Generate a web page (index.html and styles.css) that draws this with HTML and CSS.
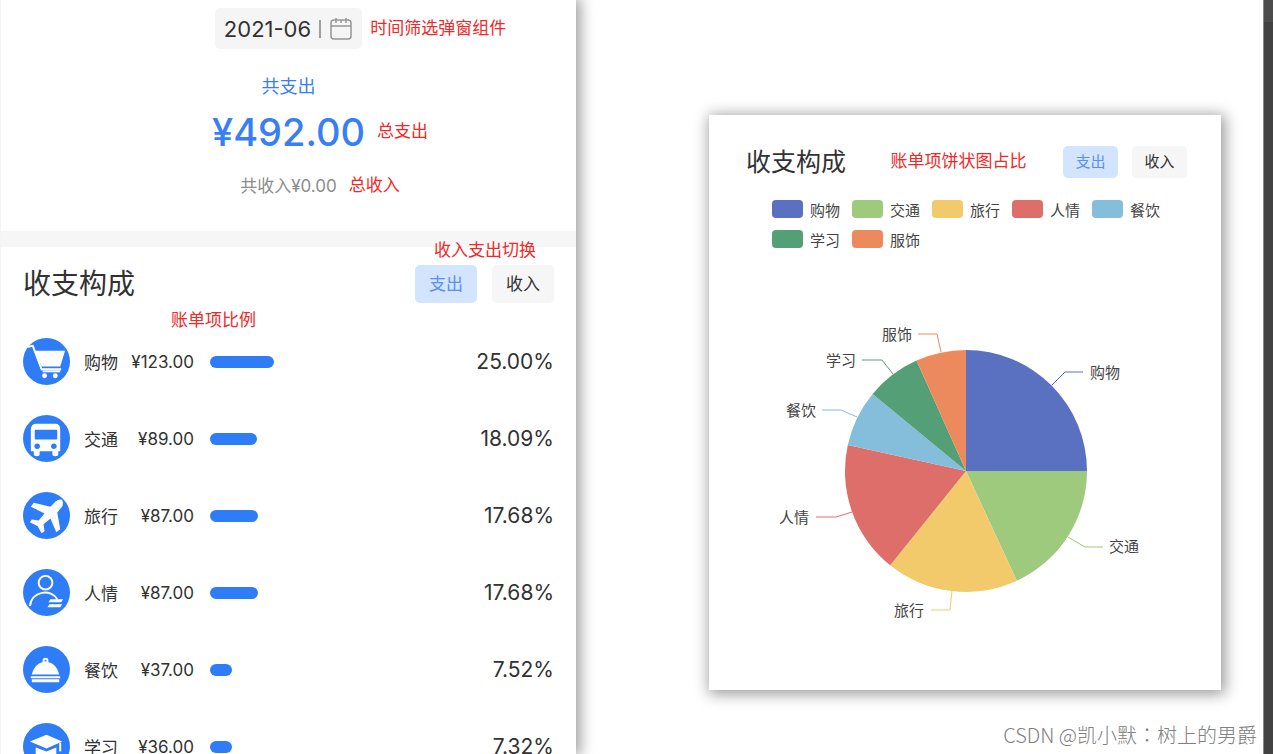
FILE: index.html
```html
<!DOCTYPE html>
<html lang="zh-CN">
<head>
  <meta charset="UTF-8" />
  <meta name="viewport" content="width=device-width, initial-scale=1.0" />
  <title>账单统计</title>
  <link rel="stylesheet" href="styles.css">
</head>
<body>
  <div class="page">
    <section class="phone">
      <div class="summary">
        <div class="line">
          <button class="month" type="button">
            <span>2021-06</span>
            <span class="sep"></span>
            <svg class="calendar" viewBox="0 0 24 24" aria-hidden="true">
              <rect x="2" y="3" width="20" height="19" rx="3" />
              <path d="M2 9h20M7 1v5M12 3v3M17 1v5" />
            </svg>
          </button>
          <span class="note">时间筛选弹窗组件</span>
        </div>
        <div class="expense-label">共支出</div>
        <div class="line expense">
          <span>¥492.00</span>
          <span class="note">总支出</span>
        </div>
        <div class="line income">
          <span>共收入¥0.00</span>
          <span class="note">总收入</span>
        </div>
      </div>

      <div class="structure">
        <div class="head">
          <h2>收支构成</h2>
          <span class="note note-ratio">账单项比例</span>
          <div class="tabs">
            <span class="note note-switch">收入支出切换</span>
            <button class="tab active" type="button">支出</button>
            <button class="tab" type="button">收入</button>
          </div>
        </div>

        <ul class="list">
          <li class="item">
            <svg class="icon" viewBox="0 0 48 48" aria-hidden="true">
              <circle class="disc" cx="24" cy="24" r="24" />
              <path class="fill" d="M12 13h31l-5 16H19z" />
              <path class="stroke" d="M5 9l5-1 9 24h20" />
              <path class="stroke" d="M20 34h18" />
              <circle class="fill" cx="22" cy="38.500" r="2.500" />
              <circle class="fill" cx="33" cy="38.500" r="2.500" />
            </svg>
            <span class="name">购物</span>
            <span class="amount">¥123.00</span>
            <span class="track"><i class="bar" style="width: 25%"></i></span>
            <span class="percent">25.00%</span>
          </li>
          <li class="item">
            <svg class="icon" viewBox="0 0 48 48" aria-hidden="true">
              <circle class="disc" cx="24" cy="24" r="24" />
              <path class="fill" d="M14 9h19q5 0 5 6v22h-2v3q0 2-3 2t-3-2v-3H17v3q0 2-3 2t-3-2v-3H8V15q0-6 6-6z" />
              <rect class="disc" x="12" y="15" width="23" height="10" rx="1" />
              <circle class="disc" cx="14.500" cy="32" r="2.800" />
              <circle class="disc" cx="31.500" cy="32" r="2.800" />
            </svg>
            <span class="name">交通</span>
            <span class="amount">¥89.00</span>
            <span class="track"><i class="bar" style="width: 18%"></i></span>
            <span class="percent">18.09%</span>
          </li>
          <li class="item">
            <svg class="icon" viewBox="0 0 48 48" aria-hidden="true">
              <circle class="disc" cx="24" cy="24" r="24" />
              <path class="fill" d="M40 8q-4-1-7 2l-5 5-17-4-3 4 14 7-6 7-7-1-2 3 8 4 4 7 3-2-1-7 7-6 6 14 4-3-3-17 4-5q3-3 1-8z" />
            </svg>
            <span class="name">旅行</span>
            <span class="amount">¥87.00</span>
            <span class="track"><i class="bar" style="width: 18%"></i></span>
            <span class="percent">17.68%</span>
          </li>
          <li class="item">
            <svg class="icon" viewBox="0 0 48 48" aria-hidden="true">
              <circle class="disc" cx="24" cy="24" r="24" />
              <circle class="stroke" cx="23" cy="14" r="7" />
              <path class="stroke" d="M7 38c2-16 22-18 28-7" />
              <path class="fill" d="M28 31h13l-2 3H26zM27 36h13l-2 3H25z" />
            </svg>
            <span class="name">人情</span>
            <span class="amount">¥87.00</span>
            <span class="track"><i class="bar" style="width: 18%"></i></span>
            <span class="percent">17.68%</span>
          </li>
          <li class="item">
            <svg class="icon" viewBox="0 0 48 48" aria-hidden="true">
              <circle class="disc" cx="24" cy="24" r="24" />
              <circle class="stroke" cx="23" cy="15" r="2" />
              <path class="fill" d="M9 29c2-8 7-13 14-13s12 5 14 13zM8 31h30v2H8zM9 34h28v3H9z" />
            </svg>
            <span class="name">餐饮</span>
            <span class="amount">¥37.00</span>
            <span class="track"><i class="bar" style="width: 8%"></i></span>
            <span class="percent">7.52%</span>
          </li>
          <li class="item">
            <svg class="icon" viewBox="0 0 48 48" aria-hidden="true">
              <circle class="disc" cx="24" cy="24" r="24" />
              <path class="fill" d="M7 19l17-7 16 7-16 7zM13 25l11 4 10-4v10q-10 6-21 0z" />
              <path class="stroke" d="M38 20v9" />
            </svg>
            <span class="name">学习</span>
            <span class="amount">¥36.00</span>
            <span class="track"><i class="bar" style="width: 8%"></i></span>
            <span class="percent">7.32%</span>
          </li>
        </ul>
      </div>
    </section>

    <main class="board">
      <section class="card">
        <div class="card-head">
          <h2>收支构成</h2>
          <span class="note-inline">账单项饼状图占比</span>
          <div class="tabs">
            <button class="tab active" type="button">支出</button>
            <button class="tab" type="button">收入</button>
          </div>
        </div>

        <ul class="legend">
          <li><i class="swatch c1"></i>购物</li>
          <li><i class="swatch c2"></i>交通</li>
          <li><i class="swatch c3"></i>旅行</li>
          <li><i class="swatch c4"></i>人情</li>
          <li><i class="swatch c5"></i>餐饮</li>
          <li><i class="swatch c6"></i>学习</li>
          <li><i class="swatch c7"></i>服饰</li>
        </ul>

        <svg class="pie" viewBox="0 0 512 380" role="img" aria-label="支出构成">
          <path class="c1" d="M257 161V40A121 121 0 0 1 378 161z" />
          <path class="c2" d="M257 161H378A121 121 0 0 1 307.900 270.800z" />
          <path class="c3" d="M257 161L307.900 270.800A121 121 0 0 1 181.200 255.300z" />
          <path class="c4" d="M257 161L181.200 255.300A121 121 0 0 1 138.800 134.900z" />
          <path class="c5" d="M257 161L138.800 134.900A121 121 0 0 1 163.600 84z" />
          <path class="c6" d="M257 161L163.600 84A121 121 0 0 1 207.500 50.600z" />
          <path class="c7" d="M257 161L207.500 50.600A121 121 0 0 1 257 40z" />

          <polyline class="c1" points="343,75 356,62 374,62" />
          <polyline class="c2" points="359,227 376,237 394,237" />
          <polyline class="c3" points="243,281 241,300 222,300" />
          <polyline class="c4" points="143,202 127,207 107,207" />
          <polyline class="c5" points="148,107 132,100 113,100" />
          <polyline class="c6" points="184,64 173,50 153,50" />
          <polyline class="c7" points="232,42 228,24 209,24" />

          <text x="381" y="68">购物</text>
          <text x="400" y="242">交通</text>
          <text class="end" x="215" y="306">旅行</text>
          <text class="end" x="100" y="213">人情</text>
          <text class="end" x="107" y="106">餐饮</text>
          <text class="end" x="147" y="56">学习</text>
          <text class="end" x="203" y="30">服饰</text>
        </svg>
      </section>
      <p class="watermark" lang="zh-TW">CSDN @凯小默：树上的男爵</p>
    </main>
    <div class="rail"></div>
  </div>
</body>
</html>
```
FILE: styles.css
```css
* {
  box-sizing: border-box;
}
body {
  margin: 0;
  font-family: Inter, "Noto Sans CJK SC", sans-serif;
  color: #323233;
  background-color: #fff;
}
h2, p, ul {
  margin: 0;
  padding: 0;
  font-weight: 400;
}
ul {
  list-style: none;
}
button {
  border: none;
  padding: 0;
  font-family: inherit;
  color: inherit;
  cursor: pointer;
}
.page {
  display: flex;
  height: 100vh;
  overflow: hidden;
}

/* left: bill statistics */
.phone {
  flex: 0 0 576px;
  border-left: 1px solid #f4f4f4;
  box-shadow: 2px 0 14px 2px rgba(0, 0, 0, 0.4);
}
.summary {
  display: flex;
  flex-direction: column;
  align-items: center;
  padding: 8px 0 32px;
  border-bottom: 16px solid #f6f6f6;
}
.line {
  position: relative;
}
.note {
  position: absolute;
  left: 100%;
  top: 50%;
  margin-left: 12px;
  font-size: 17px;
  line-height: 26px;
  margin-top: -14px;
  font-weight: 400;
  color: #f02828;
  white-space: nowrap;
}
.month {
  display: flex;
  align-items: center;
  gap: 8px;
  height: 41px;
  padding: 0 9px;
  border-radius: 5px;
  background-color: #f5f5f5;
  font-size: 22px;
}
.month + .note {
  margin-left: 8px;
}
.sep {
  width: 2px;
  height: 18px;
  background-color: #a0a0a0;
}
.calendar {
  width: 24px;
  height: 24px;
  fill: none;
  stroke: #969696;
  stroke-width: 1.5;
}
.expense-label {
  margin-top: 25px;
  font-size: 18px;
  line-height: 26px;
  color: #3a7ff2;
}
.expense {
  margin-top: 10px;
  font-size: 38px;
  font-weight: 500;
  line-height: 44px;
  color: #387ff5;
}
.income {
  margin-top: 19px;
  font-size: 17px;
  line-height: 26px;
  color: #8c8c8c;
}
.structure {
  padding: 18px 22px 0;
}
.head {
  position: relative;
  display: flex;
  justify-content: space-between;
  align-items: center;
  height: 38px;
}
.head h2 {
  font-size: 28px;
  line-height: 38px;
}
.tabs {
  position: relative;
  display: flex;
  gap: 15px;
}
.tab {
  width: 62px;
  height: 38px;
  padding-bottom: 3px;
  border-radius: 5px;
  background-color: #f6f6f6;
  font-size: 17px;
}
.tab.active {
  background-color: #d3e4fe;
  color: #5a8ff5;
}
.note-ratio {
  left: 148px;
  top: 42px;
  margin: 0;
}
.note-switch {
  left: auto;
  right: 18px;
  top: -28px;
  margin: 0;
}
.list {
  display: flex;
  flex-direction: column;
  gap: 30px;
  padding-top: 35px;
}
.item {
  display: flex;
  align-items: center;
  height: 47px;
}
.icon {
  width: 47px;
  height: 47px;
  flex: none;
}
.icon .disc {
  fill: #2f7df6;
}
.icon .fill {
  fill: #fff;
}
.icon .stroke {
  fill: none;
  stroke: #fff;
  stroke-width: 2;
}
.name {
  margin-left: 14px;
  font-size: 17px;
}
.amount {
  width: 76px;
  font-size: 17px;
  text-align: right;
}
.track {
  flex: 1;
  margin: 0 10px 0 16px;
}
.bar {
  display: block;
  height: 12px;
  border-radius: 6px;
  background-color: #2f7df6;
}
.percent {
  font-size: 21px;
}

/* right: pie chart */
.board {
  position: relative;
  flex: 1;
  padding: 115px 42px 0 133px;
}
.card {
  background-color: #fff;
  box-shadow: 2px 2px 14px 2px rgba(0, 0, 0, 0.4);
}
.card-head {
  display: flex;
  align-items: center;
  padding: 31px 34px 0 37px;
}
.card-head h2 {
  font-size: 25px;
  line-height: 32px;
}
.note-inline {
  margin: 0 auto;
  padding: 0 0 2px 8px;
  font-size: 17px;
  line-height: 24px;
  color: #f02828;
}
.card .tabs {
  gap: 14px;
}
.card .tab {
  width: 55px;
  height: 32px;
  font-size: 15px;
}
.legend {
  display: grid;
  grid-template-columns: repeat(auto-fill, 80px);
  row-gap: 12px;
  padding: 22px 48px 0 63px;
}
.legend li {
  display: flex;
  align-items: center;
  gap: 7px;
  height: 18px;
  font-size: 15px;
  color: #444;
}
.swatch {
  width: 31px;
  height: 18px;
  border-radius: 4px;
}
.pie {
  display: block;
  width: 100%;
  margin-top: 62px;
}
.pie text {
  font-size: 15px;
  fill: #444;
}
.pie .end {
  text-anchor: end;
}
.pie polyline {
  fill: none;
}
.c1 {
  fill: #5a70c0;
  stroke: #5a70c0;
  background-color: #5a70c0;
}
.c2 {
  fill: #9dca7c;
  stroke: #9dca7c;
  background-color: #9dca7c;
}
.c3 {
  fill: #f2ca6b;
  stroke: #f2ca6b;
  background-color: #f2ca6b;
}
.c4 {
  fill: #de6e6a;
  stroke: #de6e6a;
  background-color: #de6e6a;
}
.c5 {
  fill: #84bedb;
  stroke: #84bedb;
  background-color: #84bedb;
}
.c6 {
  fill: #559f76;
  stroke: #559f76;
  background-color: #559f76;
}
.c7 {
  fill: #ec8a5d;
  stroke: #ec8a5d;
  background-color: #ec8a5d;
}
.pie path {
  stroke: none;
}
.watermark {
  position: absolute;
  right: 6px;
  bottom: 4px;
  font-family: "Noto Sans CJK TC", sans-serif;
  font-size: 20px;
  font-weight: 300;
  line-height: 30px;
  color: #808080;
}
.rail {
  flex: 0 0 10px;
  border-left: 1px solid #8a8a8a;
  background: linear-gradient(#4c4c4c 22px, #424242 22px);
}
```
